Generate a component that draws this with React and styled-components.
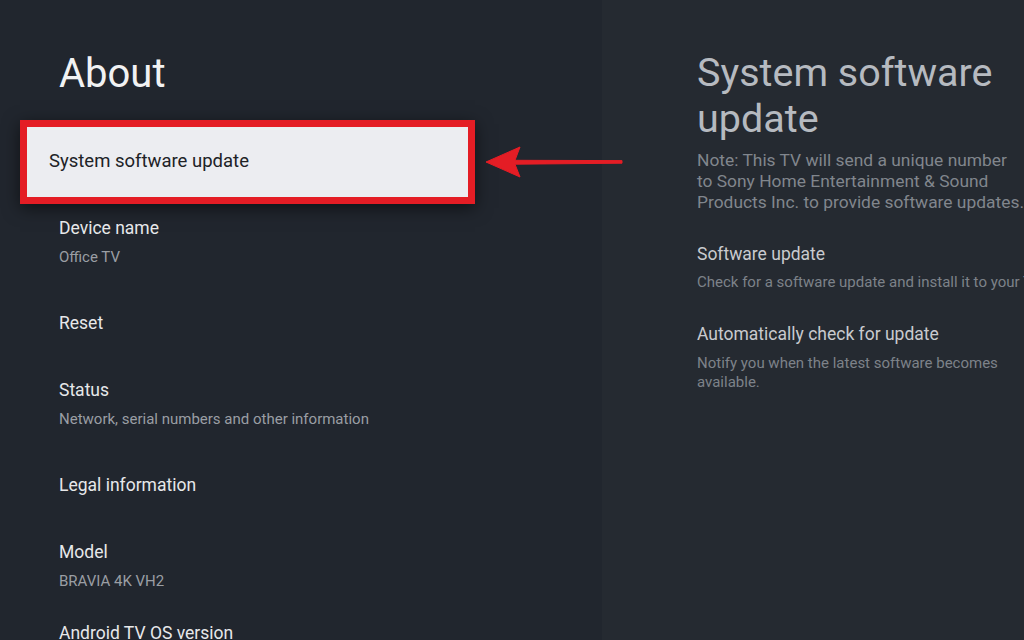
import React from "react";
import styled, { createGlobalStyle } from "styled-components";

const GlobalStyle = createGlobalStyle`
    html, body {
        margin: 0;
        padding: 0;
        overflow: hidden;
        background: #21262e;
        font-family: Roboto, "Noto Sans", "Liberation Sans", sans-serif;
    }
`

const Screen = styled.div`
    position: relative;
    display: flex;
    width: 1024px;
    height: 640px;
    overflow: hidden;
`

const LeftPane = styled.div`
    width: 602px;
    flex-shrink: 0;
    box-sizing: border-box;
    padding: 50px 0 0 59px;
    background-color: #21262e;
`

const RightPane = styled.div`
    flex: 1;
    box-sizing: border-box;
    padding: 50px 0 0 95px;
    background-color: #252a31;
    white-space: nowrap;
`

const PageTitle = styled.h1`
    margin: 0;
    font-size: 40px;
    line-height: 48px;
    font-weight: 400;
    color: #f1f2f3;
`

const Highlight = styled.div`
    display: flex;
    align-items: center;
    width: 455px;
    height: 84px;
    box-sizing: border-box;
    margin: 22px 0 0 -39px;
    padding: 0 0 3px 22px;
    border: 7px solid #e41d25;
    background-color: #ecedf1;
    box-shadow: 0 4px 16px rgba(0, 0, 0, 0.55);
    color: #202226;
    font-size: 18.5px;
`

const List = styled.div`
    display: flex;
    flex-direction: column;
    margin-top: 13px;
`

const Item = styled.div`
    padding-bottom: ${props => props.$compact ? "31px" : "45px"};
`

const ItemTitle = styled.div`
    font-size: 17.5px;
    line-height: 22px;
    color: #e7e8ea;
`

const ItemSub = styled.div`
    margin-top: 8px;
    font-size: 15px;
    line-height: 20px;
    color: #9a9ea4;
`

const DetailTitle = styled.h2`
    margin: 0;
    font-size: 39.5px;
    line-height: 46px;
    font-weight: 400;
    color: #b6bac0;
`

const Note = styled.p`
    margin: 8px 0 0;
    font-size: 17.4px;
    line-height: 21px;
    color: #81868d;
`

const Option = styled.div`
    margin-top: ${props => props.$first ? "30px" : "31px"};
`

const OptionTitle = styled.div`
    font-size: 17.5px;
    line-height: 22px;
    color: #c9cbcf;
`

const OptionSub = styled.div`
    margin-top: ${props => props.$wrap ? "9px" : "7px"};
    width: ${props => props.$wrap ? "322px" : "auto"};
    white-space: ${props => props.$wrap ? "normal" : "nowrap"};
    font-size: 15px;
    line-height: ${props => props.$wrap ? "18.5px" : "20px"};
    color: #7d8289;
`

const Pointer = styled.svg`
    position: absolute;
    left: 484px;
    top: 145px;
`

const items = [
    { title: "Device name", sub: "Office TV" },
    { title: "Reset" },
    { title: "Status", sub: "Network, serial numbers and other information" },
    { title: "Legal information" },
    { title: "Model", sub: "BRAVIA 4K VH2", compact: true },
    { title: "Android TV OS version" },
];

const App = () => {
    return(
        <Screen>
            <GlobalStyle />
            <LeftPane>
                <PageTitle>About</PageTitle>
                <Highlight>System software update</Highlight>
                <List>
                    {
                        items.map(item =>
                            <Item key={item.title} $compact={item.compact}>
                                <ItemTitle>{item.title}</ItemTitle>
                                {item.sub && <ItemSub>{item.sub}</ItemSub>}
                            </Item>
                        )
                    }
                </List>
            </LeftPane>
            <RightPane>
                <DetailTitle>System software<br />update</DetailTitle>
                <Note>
                    Note: This TV will send a unique number<br />
                    to Sony Home Entertainment &amp; Sound<br />
                    Products Inc. to provide software updates.
                </Note>
                <Option $first>
                    <OptionTitle>Software update</OptionTitle>
                    <OptionSub>Check for a software update and install it to your TV.</OptionSub>
                </Option>
                <Option>
                    <OptionTitle>Automatically check for update</OptionTitle>
                    <OptionSub $wrap>Notify you when the latest software becomes available.</OptionSub>
                </Option>
            </RightPane>
            <Pointer width="140" height="34" viewBox="0 0 140 34">
                <path
                    d="M2 17 L36 2 L31 15.3 L138 15.6 L138 18.2 L31 19.2 L36 32 Z"
                    fill="#e41d25"
                    stroke="#e41d25"
                    strokeLinejoin="round"
                    strokeWidth="1"
                />
            </Pointer>
        </Screen>
    );
};

export default App;
